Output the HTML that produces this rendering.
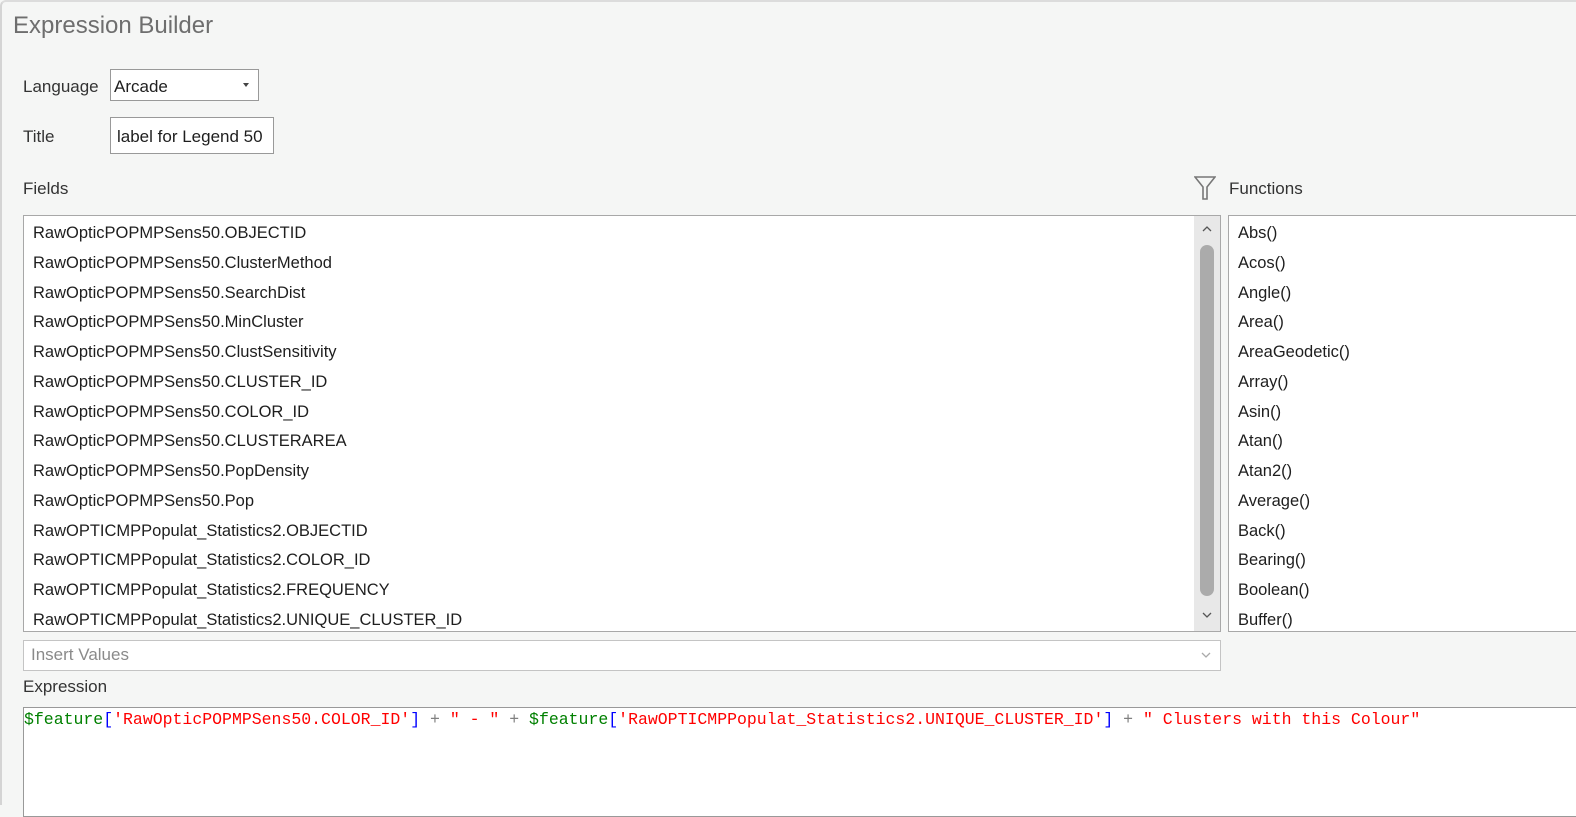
<!DOCTYPE html>
<html><head><meta charset="utf-8"><style>
*{margin:0;padding:0;box-sizing:border-box}
body{width:1576px;height:805px;overflow:hidden;background:#f5f6f5;font-family:"Liberation Sans",sans-serif;color:#1e1e1e;position:relative}
.abs{position:absolute}
.frame{left:0;top:0;width:1576px;height:805px;border-left:2px solid #d4d4d4;border-top:2px solid #dcdcdc;border-top-left-radius:6px}
.lbl{font-size:17px;color:#333}
.box{background:#fff;border:1px solid #a8a8a8}
.row{position:absolute;left:9px;font-size:16.5px;white-space:nowrap;color:#1e1e1e}
.mono{font-family:"Liberation Mono",monospace;font-size:16.5px;white-space:pre}
</style></head><body>
<div class="abs frame"></div>
<div class="abs" style="left:13px;top:12px;font-size:24px;color:#6e6e6e">Expression Builder</div>

<div class="abs lbl" style="left:23px;top:77px">Language</div>
<div class="abs box" style="left:110px;top:69px;width:149px;height:32px;border-color:#999"></div>
<div class="abs" style="left:114px;top:77px;font-size:17px">Arcade</div>
<div class="abs" style="left:243px;top:83px;width:0;height:0;border-left:3.5px solid transparent;border-right:3.5px solid transparent;border-top:4px solid #444"></div>

<div class="abs lbl" style="left:23px;top:127px">Title</div>
<div class="abs box" style="left:110px;top:117px;width:164px;height:37px;border-color:#999"></div>
<div class="abs" style="left:117px;top:127px;font-size:17px">label for Legend 50</div>

<div class="abs lbl" style="left:23px;top:179px">Fields</div>
<svg class="abs" style="left:1194px;top:176px" width="22" height="24" viewBox="0 0 22 24"><path d="M1 1H21L13 11V23H9V11Z" fill="none" stroke="#777" stroke-width="1.6"/></svg>
<div class="abs lbl" style="left:1229px;top:179px">Functions</div>

<div class="abs box" style="left:23px;top:215px;width:1198px;height:417px;overflow:hidden">
<div class="row" style="top:8px">RawOpticPOPMPSens50.OBJECTID</div>
<div class="row" style="top:38px">RawOpticPOPMPSens50.ClusterMethod</div>
<div class="row" style="top:68px">RawOpticPOPMPSens50.SearchDist</div>
<div class="row" style="top:97px">RawOpticPOPMPSens50.MinCluster</div>
<div class="row" style="top:127px">RawOpticPOPMPSens50.ClustSensitivity</div>
<div class="row" style="top:157px">RawOpticPOPMPSens50.CLUSTER_ID</div>
<div class="row" style="top:187px">RawOpticPOPMPSens50.COLOR_ID</div>
<div class="row" style="top:216px">RawOpticPOPMPSens50.CLUSTERAREA</div>
<div class="row" style="top:246px">RawOpticPOPMPSens50.PopDensity</div>
<div class="row" style="top:276px">RawOpticPOPMPSens50.Pop</div>
<div class="row" style="top:306px">RawOPTICMPPopulat_Statistics2.OBJECTID</div>
<div class="row" style="top:335px">RawOPTICMPPopulat_Statistics2.COLOR_ID</div>
<div class="row" style="top:365px">RawOPTICMPPopulat_Statistics2.FREQUENCY</div>
<div class="row" style="top:395px">RawOPTICMPPopulat_Statistics2.UNIQUE_CLUSTER_ID</div>
<div class="abs" style="left:1170px;top:0;width:27px;height:416px;background:#e8e8e8"></div>
<div class="abs" style="left:1176px;top:29px;width:14px;height:351px;background:#ababab;border-radius:7px"></div>
<svg class="abs" style="left:1176px;top:8px" width="14" height="10"><path d="M3 7L7 3L11 7" fill="none" stroke="#555" stroke-width="1.3"/></svg>
<svg class="abs" style="left:1176px;top:394px" width="14" height="10"><path d="M3 3L7 7L11 3" fill="none" stroke="#555" stroke-width="1.3"/></svg>
</div>

<div class="abs box" style="left:1228px;top:215px;width:360px;height:417px;overflow:hidden">
<div class="row" style="top:8px">Abs()</div>
<div class="row" style="top:38px">Acos()</div>
<div class="row" style="top:68px">Angle()</div>
<div class="row" style="top:97px">Area()</div>
<div class="row" style="top:127px">AreaGeodetic()</div>
<div class="row" style="top:157px">Array()</div>
<div class="row" style="top:187px">Asin()</div>
<div class="row" style="top:216px">Atan()</div>
<div class="row" style="top:246px">Atan2()</div>
<div class="row" style="top:276px">Average()</div>
<div class="row" style="top:306px">Back()</div>
<div class="row" style="top:335px">Bearing()</div>
<div class="row" style="top:365px">Boolean()</div>
<div class="row" style="top:395px">Buffer()</div>
</div>

<div class="abs box" style="left:23px;top:640px;width:1198px;height:31px;border-color:#c4c4c4"></div>
<div class="abs" style="left:31px;top:645px;font-size:17px;color:#8a8a8a">Insert Values</div>
<svg class="abs" style="left:1200px;top:650px" width="14" height="10"><path d="M2 3L6 7L10 3" fill="none" stroke="#aaa" stroke-width="1.3"/></svg>

<div class="abs lbl" style="left:23px;top:677px">Expression</div>
<div class="abs box" style="left:23px;top:707px;width:1570px;height:110px;border-color:#999"></div>
<div class="abs mono" style="left:24px;top:710px"><span style="color:#008000">$feature</span><span style="color:#0000ff">[</span><span style="color:#ff0000">'RawOpticPOPMPSens50.COLOR_ID'</span><span style="color:#0000ff">]</span><span style="color:#808080"> + </span><span style="color:#ff0000">" - "</span><span style="color:#808080"> + </span><span style="color:#008000">$feature</span><span style="color:#0000ff">[</span><span style="color:#ff0000">'RawOPTICMPPopulat_Statistics2.UNIQUE_CLUSTER_ID'</span><span style="color:#0000ff">]</span><span style="color:#808080"> + </span><span style="color:#ff0000">" Clusters with this Colour"</span></div>
</body></html>
